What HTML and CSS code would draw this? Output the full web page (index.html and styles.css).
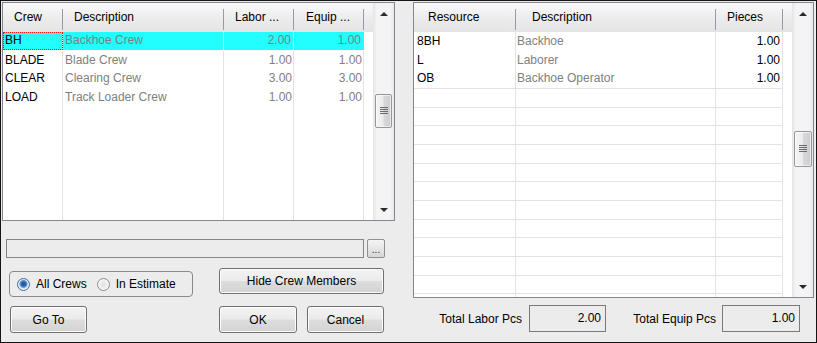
FILE: index.html
```html
<!DOCTYPE html>
<html>
<head>
<meta charset="utf-8">
<link rel="stylesheet" href="styles.css">
</head>
<body>
<div class="window">
  <div class="left">
    <div class="grid grid-left">
      <div class="grid-main">
        <div class="grid-head">
          <div class="hc lc1">Crew</div>
          <div class="hc lc2">Description</div>
          <div class="hc lc3">Labor ...</div>
          <div class="hc lc4">Equip ...</div>
          <div class="hfill"></div>
        </div>
        <div class="grid-body body-left">
          <div class="row sel">
            <div class="cell key lc1 focus">BH</div>
            <div class="cell lc2">Backhoe Crew</div>
            <div class="cell num lc3">2.00</div>
            <div class="cell num lc4">1.00</div>
          </div>
          <div class="row">
            <div class="cell key lc1">BLADE</div>
            <div class="cell lc2">Blade Crew</div>
            <div class="cell num lc3">1.00</div>
            <div class="cell num lc4">1.00</div>
          </div>
          <div class="row">
            <div class="cell key lc1">CLEAR</div>
            <div class="cell lc2">Clearing Crew</div>
            <div class="cell num lc3">3.00</div>
            <div class="cell num lc4">3.00</div>
          </div>
          <div class="row">
            <div class="cell key lc1">LOAD</div>
            <div class="cell lc2">Track Loader Crew</div>
            <div class="cell num lc3">1.00</div>
            <div class="cell num lc4">1.00</div>
          </div>
        </div>
      </div>
      <div class="vscroll">
        <div class="sb-btn"><span class="arrow-up"></span></div>
        <div class="thumb thumb-left"><span class="grip"></span></div>
        <div class="sb-fill"></div>
        <div class="sb-btn"><span class="arrow-down"></span></div>
      </div>
    </div>

    <div class="field-row">
      <div class="field"></div>
      <div class="ellipsis">...</div>
    </div>

    <div class="mid-row">
      <div class="radio-group">
        <span class="radio on"></span><span class="rlabel">All Crews</span>
        <span class="radio second"></span><span class="rlabel">In Estimate</span>
      </div>
      <div class="btn hide-btn">Hide Crew Members</div>
    </div>

    <div class="btn-row">
      <div class="btn goto-btn">Go To</div>
      <div class="btn ok-btn">OK</div>
      <div class="btn cancel-btn">Cancel</div>
    </div>
  </div>

  <div class="right">
    <div class="grid grid-right">
      <div class="grid-main">
        <div class="grid-head">
          <div class="hc rc1">Resource</div>
          <div class="hc rc2">Description</div>
          <div class="hc rc3">Pieces</div>
          <div class="hfill"></div>
        </div>
        <div class="grid-body body-right">
          <div class="row">
            <div class="cell key rc1">8BH</div>
            <div class="cell rc2">Backhoe</div>
            <div class="cell num key rc3">1.00</div>
          </div>
          <div class="row">
            <div class="cell key rc1">L</div>
            <div class="cell rc2">Laborer</div>
            <div class="cell num key rc3">1.00</div>
          </div>
          <div class="row">
            <div class="cell key rc1">OB</div>
            <div class="cell rc2">Backhoe Operator</div>
            <div class="cell num key rc3">1.00</div>
          </div>
          <div class="erow"></div>
          <div class="erow"></div>
          <div class="erow"></div>
          <div class="erow"></div>
          <div class="erow"></div>
          <div class="erow"></div>
          <div class="erow"></div>
          <div class="erow"></div>
          <div class="erow"></div>
          <div class="erow"></div>
          <div class="erow"></div>
          <div class="erow"></div>
        </div>
      </div>
      <div class="vscroll">
        <div class="sb-btn"><span class="arrow-up"></span></div>
        <div class="thumb thumb-right"><span class="grip"></span></div>
        <div class="sb-fill"></div>
        <div class="sb-btn"><span class="arrow-down"></span></div>
      </div>
    </div>

    <div class="totals">
      <div class="tlabel">Total Labor Pcs</div>
      <div class="tbox tbox1">2.00</div>
      <div class="tlabel">Total Equip Pcs</div>
      <div class="tbox tbox2">1.00</div>
    </div>
  </div>
</div>
</body>
</html>
```

FILE: styles.css
```css
* { box-sizing: border-box; }
html, body { margin: 0; padding: 0; }
body {
  width: 817px;
  height: 343px;
  border: 1px solid #141414;
  background: #ececec;
  font-family: "Liberation Sans", Arial, sans-serif;
  font-size: 12px;
  color: #000;
  overflow: hidden;
}
.window { display: flex; padding: 1px 0 0 1px; }
.left { width: 393px; display: flex; flex-direction: column; flex: none; }
.right { width: 401px; margin-left: 18px; display: flex; flex-direction: column; flex: none; }

/* grids */
.grid { display: flex; border: 1px solid #828790; background: #fff; flex: none; }
.grid-left { height: 219px; }
.grid-right { height: 296px; }
.grid-main { flex: 1; display: flex; flex-direction: column; overflow: hidden; min-width: 0; }
.grid-head {
  height: 29px;
  flex: none;
  display: flex;
  background: linear-gradient(#f9f9f9, #ececec 55%, #e4e4e4);
}
.hc {
  height: 29px;
  line-height: 29px;
  padding-left: 11px;
  white-space: nowrap;
  overflow: hidden;
  flex: none;
  background: linear-gradient(#959bab, #959bab) no-repeat right 0 top 6px / 1px 21px;
}
.hfill { flex: 1; }

.lc1 { width: 60px; }
.lc2 { width: 161px; }
.lc3 { width: 70px; }
.lc4 { width: 70px; }
.rc1 { width: 102px; }
.rc2 { width: 200px; }
.rc3 { width: 67px; }
.hc.rc1 { padding-left: 14px; }
.hc.rc2 { padding-left: 16px; }
.hc.lc4 { padding-left: 12px; }

.grid-body { flex: 1; overflow: hidden; }
.body-left {
  background: linear-gradient(to right,
    transparent 59px, #e3e3e3 59px, #e3e3e3 60px,
    transparent 60px, transparent 220px, #e3e3e3 220px, #e3e3e3 221px,
    transparent 221px, transparent 290px, #e3e3e3 290px, #e3e3e3 291px,
    transparent 291px, transparent 360px, #e3e3e3 360px, #e3e3e3 361px,
    transparent 361px);
}
.body-right {
  background: linear-gradient(to right,
    transparent 101px, #e3e3e3 101px, #e3e3e3 102px,
    transparent 102px, transparent 301px, #e3e3e3 301px, #e3e3e3 302px,
    transparent 302px, transparent 368px, #e3e3e3 368px, #e3e3e3 369px,
    transparent 369px);
}
.row { display: flex; height: 18.67px; line-height: 18px; }
.cell {
  flex: none;
  padding: 0 2px;
  white-space: nowrap;
  overflow: hidden;
  color: #808080;
}
.cell.key { color: #000; }
.cell.num { text-align: right; }
.body-right .rc1 { padding-left: 3px; }
.body-right .rc2 { padding-left: 1px; }
.body-right .rc3 { padding-right: 3px; }

.row.sel { width: 361px; background: #22fdfd; border-bottom: 1px solid #fff; line-height: 17px; }
.row.sel .cell { border-right: 1px solid #b8ffff; }
.row.sel .cell.lc4 { border-right-color: #22fdfd; }
.focus { outline: 1px dotted #e01818; outline-offset: -1px; }

.erow { width: 369px; height: 18.67px; border-top: 1px solid #e3e3e3; }

/* scrollbars */
.vscroll {
  width: 21px;
  flex: none;
  display: flex;
  flex-direction: column;
  background: linear-gradient(to right, #e4e4e4, #f4f4f4 18%, #f4f4f4 82%, #e7e7e7);
}
.sb-btn { height: 21px; flex: none; display: flex; align-items: center; justify-content: center; }
.arrow-up { width: 0; height: 0; border-style: solid; border-width: 0 4px 4px 4px; border-color: transparent transparent #2a2a2a transparent; }
.arrow-down { width: 0; height: 0; border-style: solid; border-width: 4px 4px 0 4px; border-color: #2a2a2a transparent transparent transparent; }
.sb-fill { flex: 1; }
.thumb {
  flex: none;
  align-self: center;
  border: 1px solid #979797;
  border-radius: 2px;
  background: linear-gradient(to right, #f4f4f4, #ebebeb 48%, #d8d8d8 52%, #cdcdcd);
  box-shadow: inset 0 0 0 1px rgba(255,255,255,0.6);
  display: flex;
  align-items: center;
  justify-content: center;
}
.thumb-left { width: 17px; height: 34px; margin-top: 70px; }
.thumb-right { width: 18px; height: 36px; margin-top: 107px; }
.grip { width: 8px; height: 8px; background: repeating-linear-gradient(#6a6a6a 0, #6a6a6a 1px, transparent 1px, transparent 2px); }

/* text field row */
.field-row { display: flex; margin-top: 18px; margin-left: 4px; height: 19px; flex: none; }
.field { width: 358px; height: 19px; border: 1px solid #858585; background: #ececec; }
.ellipsis {
  width: 18px;
  height: 19px;
  margin-left: 3px;
  border: 1px solid #8e8f8f;
  border-radius: 2px;
  background: linear-gradient(#f4f4f4, #e6e6e6 50%, #d6d6d6);
  font-size: 10px;
  line-height: 19px;
  text-align: center;
  color: #222;
}

/* radios and buttons */
.mid-row { display: flex; align-items: flex-start; margin-top: 10px; height: 29px; flex: none; }
.radio-group {
  margin-left: 7px;
  margin-top: 3px;
  width: 184px;
  height: 26px;
  border: 1px solid #8a8a8a;
  border-radius: 4px;
  display: flex;
  align-items: center;
  padding-left: 7px;
}
.radio {
  width: 13px;
  height: 13px;
  flex: none;
  border-radius: 50%;
  border: 1px solid #8c8c8c;
  background: radial-gradient(circle at 50% 50%, #e2e2e2 0, #ececec 3px, #f9f9f9 6px);
}
.radio.on {
  border-color: #3d6e9a;
  background: radial-gradient(circle at 50% 45%, #1f4f8f 0, #2c63a8 2px, #6a98d2 3.5px, #dbe7f4 4.5px, #f2f6fb 6px);
}
.radio.second { margin-left: 10px; }
.rlabel { margin-left: 6px; white-space: nowrap; }

.btn {
  height: 26px;
  border: 1px solid #707070;
  border-radius: 3px;
  background: linear-gradient(#f3f3f3, #ebebeb 48%, #dddddd 52%, #d3d3d3);
  box-shadow: inset 0 0 0 1px #fbfbfb;
  display: flex;
  align-items: center;
  justify-content: center;
  white-space: nowrap;
  flex: none;
}
.hide-btn { margin-left: 26px; width: 165px; }
.btn-row { display: flex; margin-top: 9px; flex: none; }
.btn-row .btn { height: 27px; }
.goto-btn { margin-left: 8px; width: 77px; }
.ok-btn { margin-left: 132px; width: 78px; }
.cancel-btn { margin-left: 10px; width: 77px; }

/* totals */
.totals { display: flex; align-items: center; margin-top: 7px; height: 27px; flex: none; }
.tlabel { width: 116px; text-align: right; white-space: nowrap; }
.tlabel:first-child { padding-right: 7px; }
.tlabel + .tbox + .tlabel { padding-right: 6px; }
.tbox {
  height: 27px;
  border: 1px solid #7a7a7a;
  background: #ececec;
  text-align: right;
  line-height: 25px;
  padding-right: 4px;
  flex: none;
}
.tbox1 { width: 77px; }
.tbox2 { width: 78px; }
```
